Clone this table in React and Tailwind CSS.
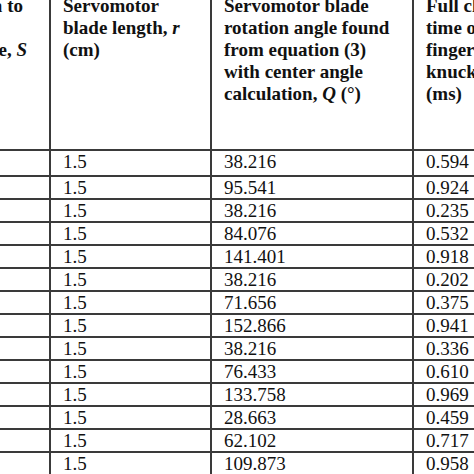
import React from 'react';

const rows = [
  '38.216', '95.541', '38.216', '84.076', '141.401', '38.216', '71.656',
  '152.866', '38.216', '76.433', '133.758', '28.663', '62.102', '109.873',
];

const times = [
  '0.594', '0.924', '0.235', '0.532', '0.918', '0.202', '0.375',
  '0.941', '0.336', '0.610', '0.969', '0.459', '0.717', '0.958',
];

function Cell({ w, first, children, className = '' }) {
  return (
    <div
      className={`${w} shrink-0 whitespace-nowrap overflow-hidden ${first ? '' : 'pl-[12px] border-l-2 border-[#3a3a3a]'} ${className}`}
    >
      {children}
    </div>
  );
}

export default function App() {
  return (
    <div className="w-[474px] h-[474px] overflow-hidden bg-white text-[#111] font-['Liberation_Serif',serif]">
      <div className="ml-[-150px] w-[700px]">
        {/* header */}
        <div className="flex h-[151px] border-b-2 border-[#3a3a3a] text-[19px] leading-[22px] font-bold">
          <Cell w="w-[199px]" first>
            <div className="-mt-[5px] text-right">
              <div className="pr-[26px]">from position to</div>
              <div className="pr-[70px]">the center of</div>
              <div className="pr-[22px]">motor blade, <i>S</i></div>
            </div>
          </Cell>
          <Cell w="w-[161px]">
            <div className="-mt-[5px]">
              <div>Servomotor</div>
              <div>blade length, <i>r</i></div>
              <div>(cm)</div>
            </div>
          </Cell>
          <Cell w="w-[202px]">
            <div className="-mt-[5px]">
              <div>Servomotor blade</div>
              <div>rotation angle found</div>
              <div>from equation (3)</div>
              <div>with center angle</div>
              <div>calculation, <i>Q</i> (°)</div>
            </div>
          </Cell>
          <Cell w="w-[138px]">
            <div className="-mt-[5px]">
              <div>Full closing</div>
              <div>time of</div>
              <div>finger</div>
              <div>knuckle</div>
              <div>(ms)</div>
            </div>
          </Cell>
        </div>

        {/* body */}
        {rows.map((q, i) => (
          <div
            key={i}
            className={`flex border-b-2 border-[#3a3a3a] text-[19px] leading-[21px] ${i === 0 ? 'h-[26px]' : 'h-[23px]'}`}
          >
            <Cell w="w-[199px]" first />
            <Cell w="w-[161px]">1.5</Cell>
            <Cell w="w-[202px]">{q}</Cell>
            <Cell w="w-[138px]">{times[i]}</Cell>
          </div>
        ))}
      </div>
    </div>
  );
}
